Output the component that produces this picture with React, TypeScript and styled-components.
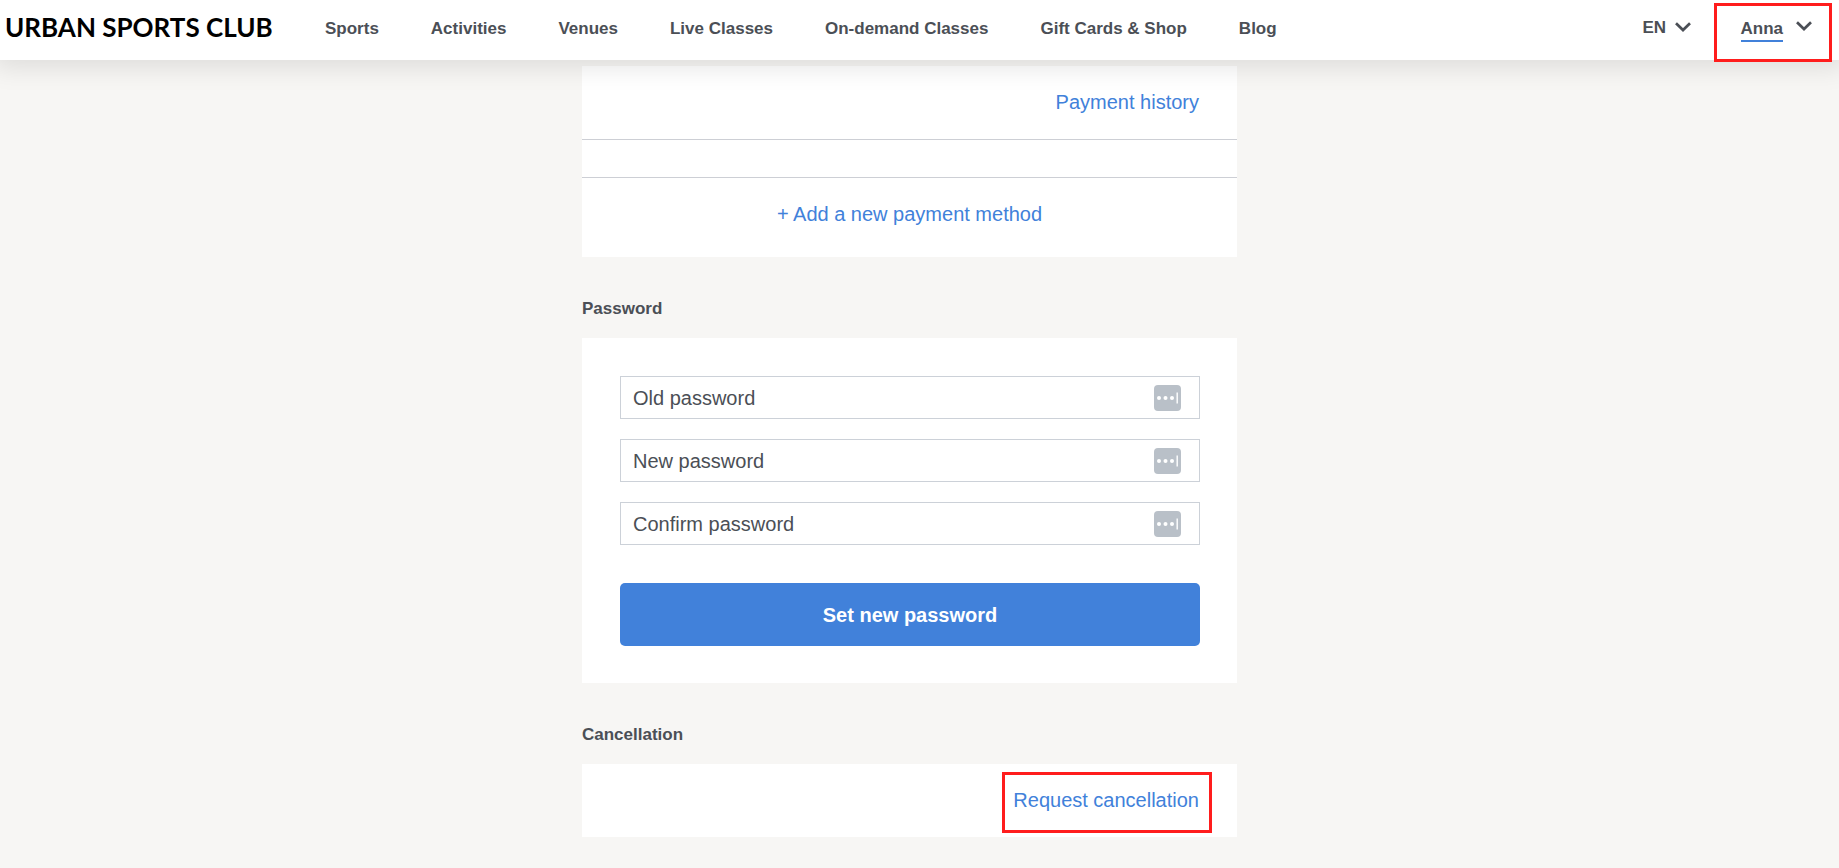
import React from "react";
import styled, { createGlobalStyle } from "styled-components";

const GlobalStyle = createGlobalStyle`
  *, *::before, *::after { box-sizing: border-box; }
  body {
    margin: 0;
    min-height: 100vh;
    background: #f7f6f4;
    color: #4b4f56;
    font-family: "Helvetica Neue", "Liberation Sans", Arial, sans-serif;
    font-size: 20px;
    line-height: 24px;
  }
  a { text-decoration: none; }
  button, input, select { font: inherit; color: inherit; }
`;

const Header = styled.header`
  position: sticky;
  top: 0;
  z-index: 10;
  display: flex;
  align-items: center;
  height: 60px;
  padding: 0 27px 2px 5px;
  background: #fff;
  box-shadow: 0 2px 26px 6px rgba(0, 0, 0, 0.1);
  font-size: 17px;
  font-weight: 700;
  white-space: nowrap;
`;

const Logo = styled.a`
  flex: 0 0 320px;
  padding-bottom: 4px;
  color: #000;
  font-family: Lato, sans-serif;
  font-size: 26px;
  font-weight: 700;
`;

const Nav = styled.nav`
  display: flex;
  gap: 52px;
  margin-right: auto;
`;

const NavLink = styled.a`
  color: #4b4f56;
`;

const Tools = styled.div`
  display: flex;
  align-items: center;
  gap: 50px;
`;

const Language = styled.label`
  display: flex;
  align-items: center;
  padding-bottom: 2px;
  svg {
    margin: 0 0 2px -16px;
    pointer-events: none;
  }
`;

const LanguageSelect = styled.select`
  appearance: none;
  width: 48px;
  padding: 0;
  border: 0;
  background: none;
  font-weight: 700;
`;

const marked = `
  position: relative;
  &::after {
    content: "";
    position: absolute;
    border: 3px solid #ff1d1d;
    pointer-events: none;
  }
`;

const AccountButton = styled.button`
  ${marked}
  display: flex;
  align-items: center;
  gap: 13px;
  padding: 0;
  border: 0;
  background: none;
  font-weight: 700;
  svg { margin-bottom: 6px; }
  &::after { inset: -13px -20px -20px -27px; }
`;

const AccountName = styled.span`
  height: 26px;
  padding-top: 2px;
  line-height: 22px;
  border-bottom: 2px solid #4181da;
`;

const PageArea = styled.div`
  padding: 6px 20px 31px 0;
`;

const Main = styled.main`
  max-width: 655px;
  margin: 0 auto;
`;

const Card = styled.div`
  background: #fff;
`;

const Row = styled.div<{ $align: "end" | "center" }>`
  display: flex;
  justify-content: ${(p) => p.$align};
  padding: ${(p) => (p.$align === "center" ? "24px 38px 31px" : "24px 38px 25px")};
`;

const EmptyRow = styled.div`
  height: 39px;
  border: solid #cdcfd5;
  border-width: 1px 0;
`;

const TextLink = styled.a`
  color: #4181da;
`;

const MarkedLink = styled(TextLink)`
  ${marked}
  &::after { inset: -16px -13px -21px -11px; }
`;

const Heading = styled.h2`
  margin: 40px 0 17px;
  font-size: 17px;
  line-height: 24px;
  font-weight: 700;
`;

const PasswordForm = styled.form`
  display: flex;
  flex-direction: column;
  gap: 20px;
  padding: 38px 37px 37px 38px;
  background: #fff;
`;

const Field = styled.div`
  display: flex;
  align-items: center;
  height: 43px;
  padding: 0 18px 0 12px;
  border: 1px solid #ccd1d8;
`;

const FieldInput = styled.input`
  flex: 1;
  min-width: 0;
  padding: 0;
  border: 0;
  outline: 0;
  background: none;
  &::placeholder {
    color: #4b4f56;
    opacity: 1;
  }
`;

const SubmitButton = styled.button`
  height: 63px;
  margin-top: 18px;
  border: 0;
  border-radius: 5px;
  background: #4181da;
  color: #fff;
  font-weight: 700;
`;

const Chevron = () => (
  <svg width="16" height="10" viewBox="0 0 16 10" fill="none" stroke="#4b4f56" strokeWidth="2.7" aria-hidden="true">
    <path d="M1 1.2 8 8 15 1.2" />
  </svg>
);

const PasswordManagerIcon = () => (
  <svg width="27" height="26" viewBox="0 0 27 26" fill="#fff" aria-hidden="true">
    <rect width="27" height="26" rx="4" fill="#b9c0c8" />
    <circle cx="5" cy="13" r="2" />
    <circle cx="11.5" cy="13" r="2" />
    <circle cx="18" cy="13" r="2" />
    <rect x="22.5" y="7.5" width="1.4" height="11" />
  </svg>
);

const navItems = ["Sports", "Activities", "Venues", "Live Classes", "On-demand Classes", "Gift Cards & Shop", "Blog"];
const passwordFields = ["Old password", "New password", "Confirm password"];

export default function App() {
  return (
    <>
      <GlobalStyle />
      <Header>
        <Logo href="#">URBAN SPORTS CLUB</Logo>
        <Nav>
          {navItems.map((item) => (
            <NavLink href="#" key={item}>{item}</NavLink>
          ))}
        </Nav>
        <Tools>
          <Language>
            <LanguageSelect aria-label="Language" defaultValue="EN">
              <option>EN</option>
            </LanguageSelect>
            <Chevron />
          </Language>
          <AccountButton type="button">
            <AccountName>Anna</AccountName>
            <Chevron />
          </AccountButton>
        </Tools>
      </Header>
      <PageArea>
        <Main>
          <Card>
            <Row $align="end"><TextLink href="#">Payment history</TextLink></Row>
            <EmptyRow />
            <Row $align="center"><TextLink href="#">+ Add a new payment method</TextLink></Row>
          </Card>
          <Heading>Password</Heading>
          <PasswordForm>
            {passwordFields.map((label) => (
              <Field key={label}>
                <FieldInput type="password" placeholder={label} aria-label={label} />
                <PasswordManagerIcon />
              </Field>
            ))}
            <SubmitButton type="button">Set new password</SubmitButton>
          </PasswordForm>
          <Heading>Cancellation</Heading>
          <Card>
            <Row $align="end"><MarkedLink href="#">Request cancellation</MarkedLink></Row>
          </Card>
        </Main>
      </PageArea>
    </>
  );
}
